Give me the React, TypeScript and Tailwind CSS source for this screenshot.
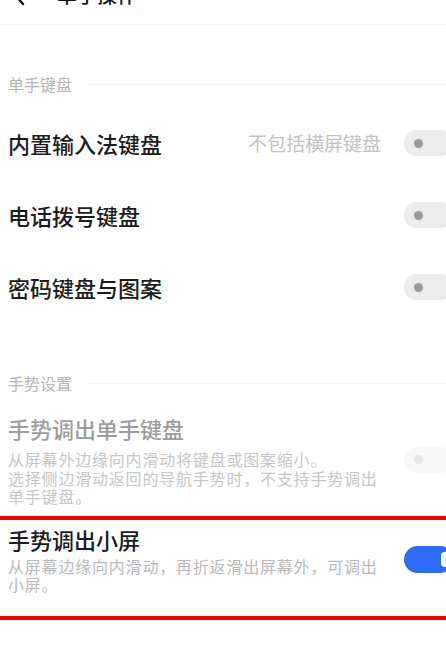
import React from "react";

const font = { fontFamily: '"Noto Sans CJK SC", "Noto Sans", sans-serif' };

function ToggleOff({ disabled = false }: { disabled?: boolean }) {
  return (
    <div
      className={`shrink-0 w-[50px] h-[26px] rounded-full mr-[-8px] flex items-center pl-[10px] ${
        disabled ? "bg-[#f7f7f7]" : "bg-[#ececec]"
      }`}
    >
      <div className={`w-[9px] h-[9px] rounded-full ${disabled ? "bg-[#e4e4e4]" : "bg-[#9b9b9b]"}`} />
    </div>
  );
}

function ToggleOn() {
  return (
    <div className="shrink-0 w-[50px] h-[27px] rounded-full mr-[-8px] flex items-center justify-end pr-[3px] bg-[#2f6cf5]">
      <div className="w-[10px] h-[15px] rounded-[4px] bg-white" />
    </div>
  );
}

function SectionLabel({ text, pt, pb }: { text: string; pt: string; pb: string }) {
  return (
    <div className={`flex items-center pl-[8px] ${pt} ${pb}`}>
      <span className="text-[16px] leading-[20px] text-[#b5b5b5]">{text}</span>
      <div className="flex-1 h-px bg-[#f6f6f6] ml-[14px]" />
    </div>
  );
}

function Row({ title, extra }: { title: string; extra?: string }) {
  return (
    <div className="h-[72px] flex items-center pl-[8px]">
      <span className="flex-1 text-[22px] leading-[28px] text-[#1c1c1c] font-medium">{title}</span>
      {extra && <span className="text-[19px] text-[#c2c2c2] mr-[23px]">{extra}</span>}
      <ToggleOff />
    </div>
  );
}

export default function App() {
  return (
    <div className="w-[446px] h-[647px] overflow-hidden bg-white" style={font}>
      {/* header, mostly scrolled off */}
      <div className="h-[60px] -mt-[35px] flex items-center border-b border-[#f2f2f2]">
        <svg width="14" height="24" viewBox="0 0 14 24" className="ml-[12px]">
          <path d="M11 3 L3 12 L11 21" fill="none" stroke="#111" strokeWidth="2.4" strokeLinecap="round" strokeLinejoin="round" />
        </svg>
        <span className="ml-[31px] text-[20px] font-medium text-[#111]">单手操作</span>
      </div>

      <SectionLabel text="单手键盘" pt="pt-[49px]" pb="pb-[13px]" />
      <Row title="内置输入法键盘" extra="不包括横屏键盘" />
      <Row title="电话拨号键盘" />
      <Row title="密码键盘与图案" />

      <SectionLabel text="手势设置" pt="pt-[50px]" pb="pb-[21px]" />

      <div className="flex items-center pl-[8px] pb-[10px]">
        <div className="flex-1">
          <div className="text-[22px] leading-[28px] text-[#9d9d9d] font-medium">手势调出单手键盘</div>
          <div className="mt-[8px] text-[16px] leading-[18.5px] tracking-[0.8px] text-[#c6c6c6] w-[380px]">
            从屏幕外边缘向内滑动将键盘或图案缩小。
            <br />
            选择侧边滑动返回的导航手势时，不支持手势调出单手键盘。
          </div>
        </div>
        <ToggleOff disabled />
      </div>

      <div className="border-y-[4px] border-[#ee0000] flex items-center pl-[8px] pt-[5px] pb-[22px]">
        <div className="flex-1">
          <div className="text-[22px] leading-[28px] text-[#1c1c1c] font-medium">手势调出小屏</div>
          <div className="mt-[4px] text-[16px] leading-[18.5px] tracking-[0.8px] text-[#b9b9b9] w-[380px]">
            从屏幕边缘向内滑动，再折返滑出屏幕外，可调出小屏。
          </div>
        </div>
        <ToggleOn />
      </div>
    </div>
  );
}
